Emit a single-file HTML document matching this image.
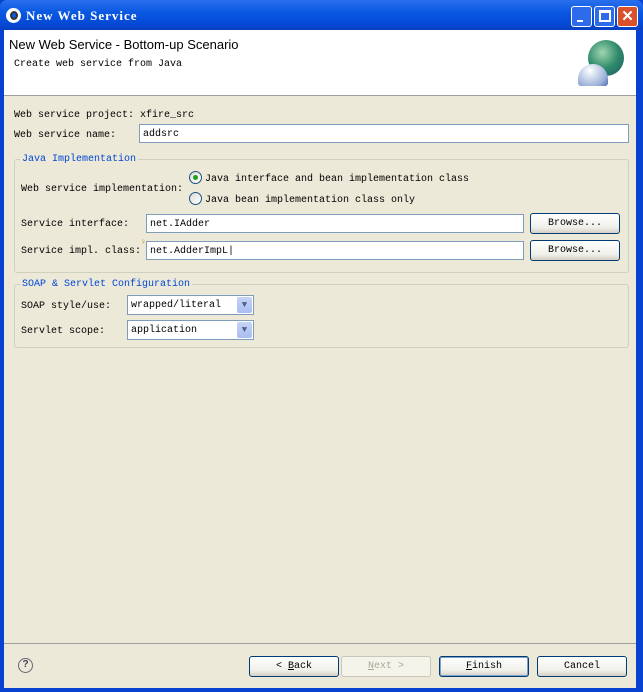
<!DOCTYPE html>
<html><head><meta charset="utf-8"><style>
*{box-sizing:border-box;margin:0;padding:0}
body{width:643px;height:692px;overflow:hidden;background:#0842d0;font-family:"Liberation Mono",monospace;font-size:10px;color:#000;position:relative}
.a{position:absolute;white-space:pre}
#title{left:0;top:0;width:643px;height:30px;background:linear-gradient(#2a70ee,#0a58e2 40%,#0549d5 80%,#0840c0);border-radius:7px 7px 0 0}
#frame{left:4px;top:30px;width:632px;height:658px;background:#ece9d8}
#banner{left:4px;top:30px;width:632px;height:66px;background:#fff;border-bottom:1px solid #a0a0a0}
.inp{position:absolute;background:#fff;border:1px solid #7f9db9;height:19px;padding:4px 3px 0;white-space:pre}
.btn{position:absolute;height:21px;border:1px solid #003c74;border-radius:3px;background:linear-gradient(#fff,#f0f0ea 70%,#d6d0c5);text-align:center;line-height:20px;white-space:pre}
.grp{position:absolute;border:1px solid #d0d0bf;border-radius:3px}
.gl{position:absolute;background:#ece9d8;color:#0046d5;padding:0 2px;white-space:pre}
.combo{position:absolute;background:#fff;border:1px solid #7f9db9;height:20px;padding:4px 3px 0}
.dd{position:absolute;right:1px;top:1px;width:15px;height:16px;background:linear-gradient(#c6d3f7,#a9bdf1);border-radius:2px;color:#4d6185;font-size:9px;text-align:center;line-height:16px}
.radio{position:absolute;width:13px;height:13px;border-radius:50%;border:1px solid #1c5180;background:linear-gradient(135deg,#dcdcd6,#fff)}
</style></head><body>
<div id="title" class="a"></div>
<div class="a" style="left:6px;top:8px;width:15px;height:15px;border-radius:50%;background:#fff"></div>
<div class="a" style="left:10px;top:11px;width:8px;height:9px;border-radius:50%;background:#0a58e2;border:2px solid #333"></div>
<div class="a" style="left:26px;top:8px;color:#fff;font-family:'Liberation Serif',serif;font-weight:bold;font-size:13px;letter-spacing:1px">New Web Service</div>
<div class="a" style="left:571px;top:6px;width:21px;height:21px;border:1px solid #fff;border-radius:3px;background:#2e6bea"><div style="position:absolute;left:5px;top:13px;width:6px;height:2px;background:#fff"></div></div>
<div class="a" style="left:594px;top:6px;width:21px;height:21px;border:1px solid #fff;border-radius:3px;background:#2e6bea"><div style="position:absolute;left:4px;top:3px;width:12px;height:12px;border:2px solid #fff;border-top-width:3px"></div></div>
<div class="a" style="left:617px;top:6px;width:21px;height:21px;border:1px solid #fff;border-radius:3px;background:#d9502c;color:#fff;font:bold 15px 'Liberation Sans',sans-serif;text-align:center;line-height:19px">✕</div>
<div id="frame" class="a"></div>
<div id="banner" class="a"></div>
<div class="a" style="left:9px;top:37px;font-family:'Liberation Sans',sans-serif;font-size:13px">New Web Service - Bottom-up Scenario</div>
<div class="a" style="left:14px;top:59px">Create web service from Java</div>
<div class="a" style="left:588px;top:40px;width:36px;height:36px;border-radius:50%;background:radial-gradient(circle at 40% 35%,#9fd6b0,#2f8a6a 50%,#1a5a6a)"></div>
<div class="a" style="left:578px;top:64px;width:30px;height:22px;border-radius:15px 15px 3px 3px;background:radial-gradient(circle at 40% 30%,#fff,#9ab0d8 70%,#4a68b0)"></div>

<div class="a" style="left:14px;top:110px">Web service project: xfire_src</div>
<div class="a" style="left:14px;top:130px">Web service name:</div>
<div class="inp" style="left:139px;top:124px;width:490px">addsrc</div>

<div class="grp" style="left:14px;top:159px;width:615px;height:114px"></div>
<div class="gl" style="left:20px;top:154px">Java Implementation</div>
<div class="a" style="left:21px;top:184px">Web service implementation:</div>
<div class="radio" style="left:189px;top:171px"><div style="position:absolute;left:3px;top:3px;width:5px;height:5px;border-radius:50%;background:#21a121"></div></div>
<div class="a" style="left:205px;top:174px">Java interface and bean implementation class</div>
<div class="radio" style="left:189px;top:192px"></div>
<div class="a" style="left:205px;top:195px">Java bean implementation class only</div>
<div class="a" style="left:21px;top:219px">Service interface:</div>
<div class="inp" style="left:146px;top:214px;width:378px">net.IAdder</div>
<div class="btn" style="left:530px;top:213px;width:90px">Browse...</div>
<div class="a" style="left:21px;top:246px">Service impl. class:</div>
<div class="a" style="left:141px;top:238px;color:#c08020;font-size:8px">♀</div>
<div class="inp" style="left:146px;top:241px;width:378px">net.AdderImpL|</div>
<div class="btn" style="left:530px;top:240px;width:90px">Browse...</div>

<div class="grp" style="left:14px;top:284px;width:615px;height:64px"></div>
<div class="gl" style="left:20px;top:279px">SOAP &amp; Servlet Configuration</div>
<div class="a" style="left:21px;top:301px">SOAP style/use:</div>
<div class="combo" style="left:127px;top:295px;width:127px">wrapped/literal<div class="dd">▼</div></div>
<div class="a" style="left:21px;top:326px">Servlet scope:</div>
<div class="combo" style="left:127px;top:320px;width:127px">application<div class="dd">▼</div></div>

<div class="a" style="left:4px;top:643px;width:632px;height:1px;background:#a0a0a0"></div>
<div class="a" style="left:18px;top:658px;width:15px;height:15px;border-radius:50%;border:1px solid #667;text-align:center;line-height:13px;font:bold 10px 'Liberation Sans',sans-serif;color:#445">?</div>
<div class="btn" style="left:249px;top:656px;width:90px">&lt; <u>B</u>ack</div>
<div class="btn" style="left:341px;top:656px;width:90px;border-color:#c9c7ba;color:#aca899;background:#f5f4ea"><u>N</u>ext &gt;</div>
<div class="btn" style="left:439px;top:656px;width:90px;box-shadow:inset 0 0 0 1px #7da2ce"><u>F</u>inish</div>
<div class="btn" style="left:537px;top:656px;width:90px">Cancel</div>
</body></html>
